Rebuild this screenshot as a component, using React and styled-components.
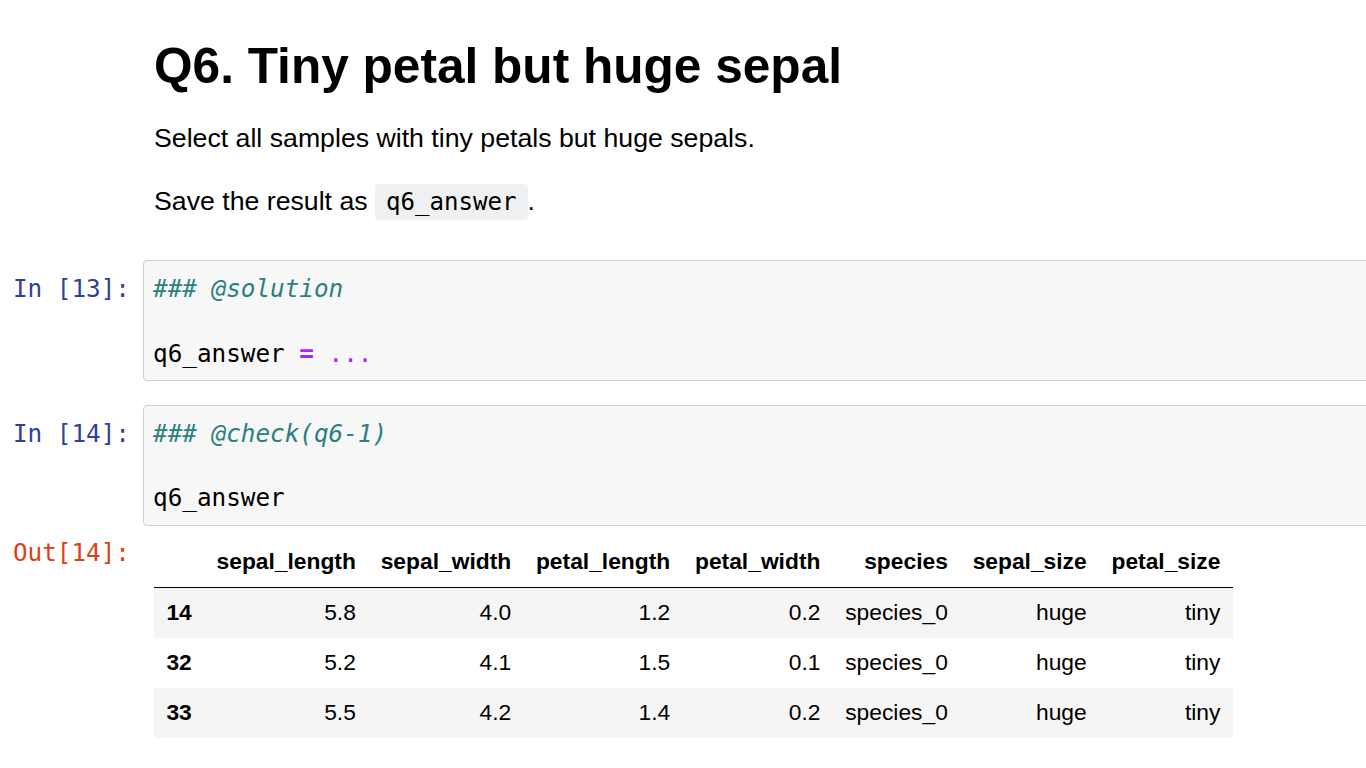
import React from "react";
import styled, { createGlobalStyle } from "styled-components";

const Global = createGlobalStyle`
  html, body {
    margin: 0;
    padding: 0;
    background: #ffffff;
    overflow: hidden;
  }
  body {
    font-family: "Liberation Sans", Arial, sans-serif;
    color: #000;
  }
`;

const Page = styled.div`
  width: 1420px;
  padding-top: 38px;
  display: flex;
  flex-direction: column;
`;

const Cell = styled.div`
  display: flex;
  align-items: flex-start;
  margin-top: ${(p) => p.$gap || 0}px;
`;

const Prompt = styled.div`
  flex: none;
  width: 143px;
  box-sizing: border-box;
  padding-right: 13px;
  padding-top: ${(p) => p.$top || 0}px;
  text-align: right;
  font-family: "DejaVu Sans Mono", "Liberation Mono", monospace;
  font-size: 24.3px;
  line-height: 32.3px;
  white-space: pre;
  color: ${(p) => (p.$out ? "#D84315" : "#303F9F")};
`;

const Markdown = styled.div`
  flex: 1;
  padding-left: 11px;
`;

const Heading = styled.h1`
  margin: 0 0 24px 0;
  font-size: 49.6px;
  line-height: 57px;
  font-weight: bold;
`;

const Para = styled.p`
  margin: 0 0 25px 0;
  font-size: 26.7px;
  line-height: 38px;
  &:last-child {
    margin-bottom: 0;
  }
`;

const InlineCode = styled.code`
  font-family: "DejaVu Sans Mono", "Liberation Mono", monospace;
  font-size: 24.1px;
  background: #eff0f1;
  border-radius: 4px;
  padding: 4px 11px;
`;

const InputArea = styled.div`
  flex: 1;
  border: 1px solid #cfcfcf;
  border-radius: 4px;
  background: #f7f7f7;
  padding: 12px 9px 10px 9px;
  font-family: "DejaVu Sans Mono", "Liberation Mono", monospace;
  font-size: 24.3px;
  line-height: 32.3px;
  white-space: pre;
  color: #000;
`;

const Line = styled.div`
  min-height: 32.3px;
`;

const Comment = styled.span`
  color: #2b8080;
  font-style: italic;
`;

const Operator = styled.span`
  color: #aa22ff;
  font-weight: ${(p) => (p.$bold ? "bold" : "normal")};
`;

const OutputArea = styled.div`
  flex: 1;
  padding-left: 11px;
`;

const Table = styled.table`
  border-collapse: collapse;
  border-spacing: 0;
  font-family: "Liberation Sans", Arial, sans-serif;
  font-size: 22.8px;
  line-height: 27.2px;
  color: #000;
`;

const THead = styled.thead`
  border-bottom: 1px solid #000;
`;

const Th = styled.th`
  padding: 11.4px 12.4px;
  text-align: ${(p) => p.$align || "right"};
  font-weight: bold;
  white-space: nowrap;
  vertical-align: ${(p) => (p.$align === "left" ? "middle" : "bottom")};
`;

const Tr = styled.tr`
  &:nth-child(odd) {
    background: #f5f5f5;
  }
`;

const Td = styled.td`
  padding: 11.4px 12.4px;
  text-align: right;
  white-space: nowrap;
`;

const columns = [
  "sepal_length",
  "sepal_width",
  "petal_length",
  "petal_width",
  "species",
  "sepal_size",
  "petal_size",
];

const rows = [
  ["14", "5.8", "4.0", "1.2", "0.2", "species_0", "huge", "tiny"],
  ["32", "5.2", "4.1", "1.5", "0.1", "species_0", "huge", "tiny"],
  ["33", "5.5", "4.2", "1.4", "0.2", "species_0", "huge", "tiny"],
];

export default function App() {
  return (
    <>
      <Global />
      <Page>
        <Cell>
          <Prompt />
          <Markdown>
            <Heading>Q6. Tiny petal but huge sepal</Heading>
            <Para>Select all samples with tiny petals but huge sepals.</Para>
            <Para>
              Save the result as <InlineCode>q6_answer</InlineCode>.
            </Para>
          </Markdown>
        </Cell>

        <Cell $gap={39}>
          <Prompt $top={13}>In [13]:</Prompt>
          <InputArea>
            <Line>
              <Comment>### @solution</Comment>
            </Line>
            <Line />
            <Line>
              q6_answer <Operator $bold>=</Operator> <Operator>...</Operator>
            </Line>
          </InputArea>
        </Cell>

        <Cell $gap={24}>
          <Prompt $top={13}>In [14]:</Prompt>
          <InputArea>
            <Line>
              <Comment>### @check(q6-1)</Comment>
            </Line>
            <Line />
            <Line>q6_answer</Line>
          </InputArea>
        </Cell>

        <Cell $gap={11}>
          <Prompt $out>Out[14]:</Prompt>
          <OutputArea>
            <Table>
              <THead>
                <tr>
                  <Th />
                  {columns.map((c) => (
                    <Th key={c}>{c}</Th>
                  ))}
                </tr>
              </THead>
              <tbody>
                {rows.map((r) => (
                  <Tr key={r[0]}>
                    <Th $align="left">{r[0]}</Th>
                    {r.slice(1).map((v, i) => (
                      <Td key={i}>{v}</Td>
                    ))}
                  </Tr>
                ))}
              </tbody>
            </Table>
          </OutputArea>
        </Cell>
      </Page>
    </>
  );
}
